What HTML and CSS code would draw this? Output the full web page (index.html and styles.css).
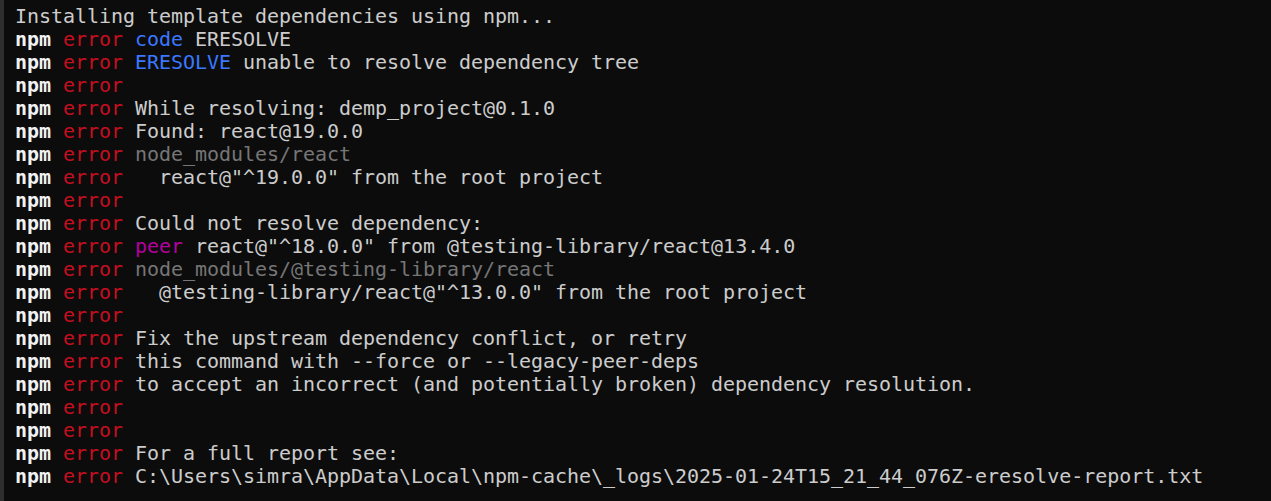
FILE: index.html
```html
<!DOCTYPE html>
<html>
<head>
<meta charset="utf-8">
<link rel="stylesheet" href="styles.css">
</head>
<body>
<div class="term">
<div class="line">Installing template dependencies using npm...</div>
<div class="line"><span class="npm">npm</span> <span class="err">error</span> <span class="blue">code</span> ERESOLVE</div>
<div class="line"><span class="npm">npm</span> <span class="err">error</span> <span class="blue">ERESOLVE</span> unable to resolve dependency tree</div>
<div class="line"><span class="npm">npm</span> <span class="err">error</span></div>
<div class="line"><span class="npm">npm</span> <span class="err">error</span> While resolving: demp_project@0.1.0</div>
<div class="line"><span class="npm">npm</span> <span class="err">error</span> Found: react@19.0.0</div>
<div class="line"><span class="npm">npm</span> <span class="err">error</span> <span class="dim">node_modules/react</span></div>
<div class="line"><span class="npm">npm</span> <span class="err">error</span>   react@"^19.0.0" from the root project</div>
<div class="line"><span class="npm">npm</span> <span class="err">error</span></div>
<div class="line"><span class="npm">npm</span> <span class="err">error</span> Could not resolve dependency:</div>
<div class="line"><span class="npm">npm</span> <span class="err">error</span> <span class="mag">peer</span> react@"^18.0.0" from @testing-library/react@13.4.0</div>
<div class="line"><span class="npm">npm</span> <span class="err">error</span> <span class="dim">node_modules/@testing-library/react</span></div>
<div class="line"><span class="npm">npm</span> <span class="err">error</span>   @testing-library/react@"^13.0.0" from the root project</div>
<div class="line"><span class="npm">npm</span> <span class="err">error</span></div>
<div class="line"><span class="npm">npm</span> <span class="err">error</span> Fix the upstream dependency conflict, or retry</div>
<div class="line"><span class="npm">npm</span> <span class="err">error</span> this command with --force or --legacy-peer-deps</div>
<div class="line"><span class="npm">npm</span> <span class="err">error</span> to accept an incorrect (and potentially broken) dependency resolution.</div>
<div class="line"><span class="npm">npm</span> <span class="err">error</span></div>
<div class="line"><span class="npm">npm</span> <span class="err">error</span></div>
<div class="line"><span class="npm">npm</span> <span class="err">error</span> For a full report see:</div>
<div class="line"><span class="npm">npm</span> <span class="err">error</span> C:\Users\simra\AppData\Local\npm-cache\_logs\2025-01-24T15_21_44_076Z-eresolve-report.txt</div>
</div>
</body>
</html>
```

FILE: styles.css
```css
html, body {
  margin: 0;
  padding: 0;
  background: #0c0c0c;
  height: 100%;
  overflow: hidden;
}
.term {
  box-sizing: border-box;
  height: 501px;
  border-left: 4px solid #2e2e2e;
  padding: 5px 0 0 11px;
  font-family: "DejaVu Sans Mono", "Liberation Mono", monospace;
  font-size: 20px;
  letter-spacing: -0.04px;
  line-height: 23px;
  color: #cccccc;
}
.line {
  height: 23px;
  white-space: pre;
}
.npm {
  color: #f2f2f2;
  font-weight: bold;
}
.err { color: #c50f1f; }
.blue { color: #3b78ff; }
.dim { color: #767676; }
.mag { color: #b4009e; }
```
